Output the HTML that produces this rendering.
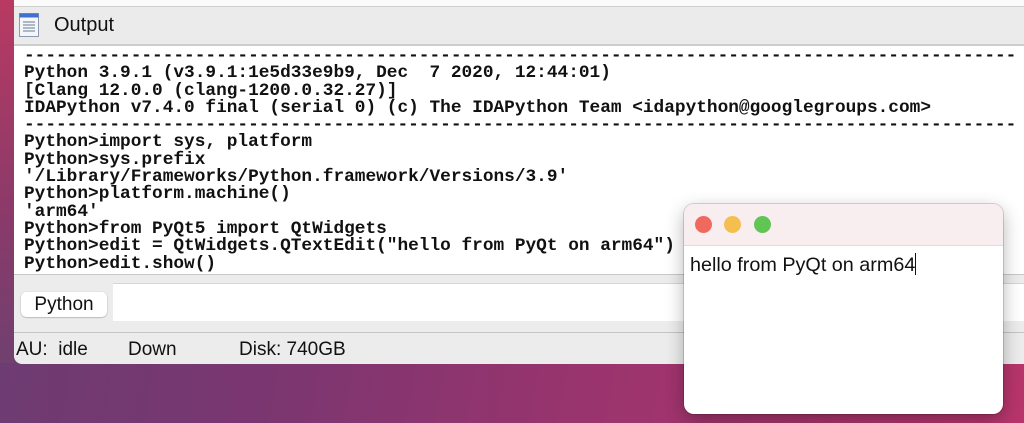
<!DOCTYPE html>
<html><head><style>
body{margin:0;width:1024px;height:423px;overflow:hidden;position:relative;
background:linear-gradient(100deg,#6a3d72 0%,#7a3670 30%,#9a346e 60%,#b8356c 100%);font-family:"Liberation Sans",sans-serif;}
.left{position:absolute;left:0;top:0;width:14px;height:363px;background:linear-gradient(180deg,#b83a62,#8a3a6a 60%,#70406f)}
.win{position:absolute;left:14px;top:0;width:1020px;height:364px;background:#ececec;border-bottom-left-radius:8px;overflow:hidden}
.top{position:absolute;left:0;top:0;right:0;height:6px;background:#fbfbfb;border-bottom:1px solid #cfcfcf}
.title{position:absolute;left:0;top:7px;right:0;height:37px;background:#ebebeb;border-bottom:2px solid #cdcdcd}
.title span{position:absolute;left:40px;top:7px;font-size:20px;color:#111}
.out{position:absolute;left:0;top:46px;right:0;height:228px;background:#fff;border-bottom:1px solid #c8c8c8;overflow:hidden}
pre{margin:0;position:absolute;left:10px;top:2px;font-family:"Liberation Mono",monospace;font-weight:bold;font-size:17.8px;line-height:17.3px;color:#111}
.btn{position:absolute;left:7px;top:292px;width:86px;height:25px;background:#fff;border-radius:5px;box-shadow:0 0.5px 1.5px rgba(0,0,0,.35);font-size:19px;text-align:center;line-height:25px;color:#111}
.inp{position:absolute;left:99px;top:283px;right:0;height:37px;background:#fff;border-top:1px solid #d6d6d6}
.sep{position:absolute;left:0;right:0;top:332px;border-top:1px solid #c4c4c4}
.st{position:absolute;top:339px;font-size:19px;color:#111}
.pop{position:absolute;left:684px;top:204px;width:319px;height:210px;background:#fff;border-radius:10px;box-shadow:0 0 0 1px rgba(0,0,0,.15),0 6px 18px rgba(0,0,0,.3);overflow:hidden}
.ptb{height:41px;background:#f8eef0;border-bottom:1px solid #ddd;position:relative}
.d{position:absolute;top:12px;width:17px;height:17px;border-radius:50%}
.ptxt{position:absolute;left:6px;top:49px;font-size:19.8px;color:#111}
.cur{display:inline-block;width:1px;height:22px;background:#111;vertical-align:-4px}
</style></head><body>
<div class="left"></div>
<div class="win">
<div class="top"></div>
<div class="title">
<svg style="position:absolute;left:5px;top:6px" width="20" height="24" viewBox="0 0 20 24"><rect x="0.5" y="0.5" width="19" height="23" fill="#f4f6fa" stroke="#8a9ab0"/><rect x="0.5" y="0.5" width="19" height="4" fill="#3f6fd0"/><g stroke="#6a7a90" stroke-width="1"><line x1="4" y1="9" x2="16" y2="9"/><line x1="4" y1="12" x2="16" y2="12"/><line x1="4" y1="15" x2="16" y2="15"/><line x1="4" y1="18" x2="16" y2="18"/></g></svg>
<span>Output</span></div>
<div class="out"><pre>---------------------------------------------------------------------------------------------
Python 3.9.1 (v3.9.1:1e5d33e9b9, Dec  7 2020, 12:44:01)
[Clang 12.0.0 (clang-1200.0.32.27)]
IDAPython v7.4.0 final (serial 0) (c) The IDAPython Team &lt;idapython@googlegroups.com&gt;
---------------------------------------------------------------------------------------------
Python&gt;import sys, platform
Python&gt;sys.prefix
'/Library/Frameworks/Python.framework/Versions/3.9'
Python&gt;platform.machine()
'arm64'
Python&gt;from PyQt5 import QtWidgets
Python&gt;edit = QtWidgets.QTextEdit("hello from PyQt on arm64")
Python&gt;edit.show()</pre></div>
<div class="btn">Python</div>
<div class="inp"></div>
<div class="sep"></div>
<div class="st" style="left:2px">AU:&nbsp; idle</div>
<div class="st" style="left:114px">Down</div>
<div class="st" style="left:225px">Disk: 740GB</div>
</div>
<div class="pop"><div class="ptb">
<div class="d" style="left:11px;background:#ee6a5e"></div>
<div class="d" style="left:40px;background:#f5bf4f"></div>
<div class="d" style="left:70px;background:#61c554"></div></div>
<div class="ptxt">hello from PyQt on arm64<span class="cur"></span></div></div>
</body></html>
